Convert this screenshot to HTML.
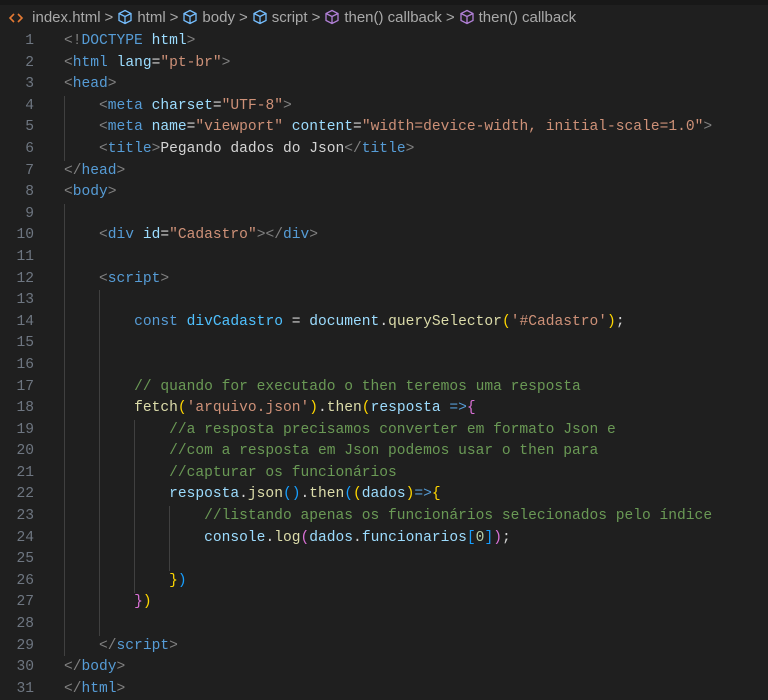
<!DOCTYPE html>
<html><head><meta charset="utf-8"><style>
body{margin:0;width:768px;height:699px;background:#1f1f1f;overflow:hidden;position:relative;font-family:"Liberation Mono",monospace}
.top{position:absolute;left:0;top:0;width:768px;height:5px;background:#181818}
.bc{position:absolute;left:0;top:7px;height:22px;font-family:"Liberation Sans",sans-serif;font-size:15px;color:#a9a9a9;line-height:22px;white-space:nowrap;letter-spacing:0}
.bc svg{vertical-align:-3px;margin-right:4px}
.bc .s{margin:0 4px;color:#a9a9a9}
.ln{position:absolute;left:0;width:34px;text-align:right;color:#6e7681;font-size:14.6px;line-height:21.6px}
.code{position:absolute;left:64px;font-size:14.6px;line-height:21.6px;white-space:pre;color:#d4d4d4}
.g{position:absolute;width:1px;background:#404040}
.p{color:#808080}.t{color:#569cd6}.a{color:#9cdcfe}.s2{color:#ce9178}.c{color:#6a9955}.f{color:#dcdcaa}.v{color:#4fc1ff}.n{color:#b5cea8}
.y{color:#ffd700}.o{color:#da70d6}.b{color:#179fff}
</style></head><body>
<div class="top"></div>
<div class="bc"><svg width="16" height="14" viewBox="0 0 16 14" style="margin-left:8px"><path d="M6 3L2 7l4 4M10 3l4 4-4 4" stroke="#e37933" stroke-width="1.6" fill="none"/></svg> index.html<span class="s">&gt;</span><svg width="16" height="16" viewBox="0 0 16 16"><path d="M8 1.5l6 3v7l-6 3-6-3v-7zM2 4.5l6 3 6-3M8 7.5v7" stroke="#75beff" stroke-width="1.3" fill="none"/></svg>html<span class="s">&gt;</span><svg width="16" height="16" viewBox="0 0 16 16"><path d="M8 1.5l6 3v7l-6 3-6-3v-7zM2 4.5l6 3 6-3M8 7.5v7" stroke="#75beff" stroke-width="1.3" fill="none"/></svg>body<span class="s">&gt;</span><svg width="16" height="16" viewBox="0 0 16 16"><path d="M8 1.5l6 3v7l-6 3-6-3v-7zM2 4.5l6 3 6-3M8 7.5v7" stroke="#75beff" stroke-width="1.3" fill="none"/></svg>script<span class="s">&gt;</span><svg width="16" height="16" viewBox="0 0 16 16"><path d="M8 1.5l6 3v7l-6 3-6-3v-7zM2 4.5l6 3 6-3M8 7.5v7" stroke="#b180d7" stroke-width="1.3" fill="none"/></svg>then() callback<span class="s">&gt;</span><svg width="16" height="16" viewBox="0 0 16 16"><path d="M8 1.5l6 3v7l-6 3-6-3v-7zM2 4.5l6 3 6-3M8 7.5v7" stroke="#b180d7" stroke-width="1.3" fill="none"/></svg>then() callback</div>

<div class="g" style="left:64px;top:96px;height:65px"></div>
<div class="g" style="left:64px;top:204px;height:452px"></div>
<div class="g" style="left:99px;top:290px;height:346px"></div>
<div class="g" style="left:134px;top:420px;height:173px"></div>
<div class="g" style="left:169px;top:506px;height:65px"></div>

<div class="ln" style="top:31px">1<br>2<br>3<br>4<br>5<br>6<br>7<br>8<br>9<br>10<br>11<br>12<br>13<br>14<br>15<br>16<br>17<br>18<br>19<br>20<br>21<br>22<br>23<br>24<br>25<br>26<br>27<br>28<br>29<br>30<br>31</div>
<div class="code" style="top:31px"><span class="p">&lt;!</span><span class="t">DOCTYPE</span> <span class="a">html</span><span class="p">&gt;</span>
<span class="p">&lt;</span><span class="t">html</span> <span class="a">lang</span>=<span class="s2">"pt-br"</span><span class="p">&gt;</span>
<span class="p">&lt;</span><span class="t">head</span><span class="p">&gt;</span>
    <span class="p">&lt;</span><span class="t">meta</span> <span class="a">charset</span>=<span class="s2">"UTF-8"</span><span class="p">&gt;</span>
    <span class="p">&lt;</span><span class="t">meta</span> <span class="a">name</span>=<span class="s2">"viewport"</span> <span class="a">content</span>=<span class="s2">"width=device-width, initial-scale=1.0"</span><span class="p">&gt;</span>
    <span class="p">&lt;</span><span class="t">title</span><span class="p">&gt;</span>Pegando dados do Json<span class="p">&lt;/</span><span class="t">title</span><span class="p">&gt;</span>
<span class="p">&lt;/</span><span class="t">head</span><span class="p">&gt;</span>
<span class="p">&lt;</span><span class="t">body</span><span class="p">&gt;</span>

    <span class="p">&lt;</span><span class="t">div</span> <span class="a">id</span>=<span class="s2">"Cadastro"</span><span class="p">&gt;&lt;/</span><span class="t">div</span><span class="p">&gt;</span>

    <span class="p">&lt;</span><span class="t">script</span><span class="p">&gt;</span>

        <span class="t">const</span> <span class="v">divCadastro</span> = <span class="a">document</span>.<span class="f">querySelector</span><span class="y">(</span><span class="s2">'#Cadastro'</span><span class="y">)</span>;


        <span class="c">// quando for executado o then teremos uma resposta</span>
        <span class="f">fetch</span><span class="y">(</span><span class="s2">'arquivo.json'</span><span class="y">)</span>.<span class="f">then</span><span class="y">(</span><span class="a">resposta</span> <span class="t">=&gt;</span><span class="o">{</span>
            <span class="c">//a resposta precisamos converter em formato Json e</span>
            <span class="c">//com a resposta em Json podemos usar o then para</span>
            <span class="c">//capturar os funcionários</span>
            <span class="a">resposta</span>.<span class="f">json</span><span class="b">()</span>.<span class="f">then</span><span class="b">(</span><span class="y">(</span><span class="a">dados</span><span class="y">)</span><span class="t">=&gt;</span><span class="y">{</span>
                <span class="c">//listando apenas os funcionários selecionados pelo índice</span>
                <span class="a">console</span>.<span class="f">log</span><span class="o">(</span><span class="a">dados</span>.<span class="a">funcionarios</span><span class="b">[</span><span class="n">0</span><span class="b">]</span><span class="o">)</span>;

            <span class="y">}</span><span class="b">)</span>
        <span class="o">}</span><span class="y">)</span>

    <span class="p">&lt;/</span><span class="t">script</span><span class="p">&gt;</span>
<span class="p">&lt;/</span><span class="t">body</span><span class="p">&gt;</span>
<span class="p">&lt;/</span><span class="t">html</span><span class="p">&gt;</span></div>
</body></html>
